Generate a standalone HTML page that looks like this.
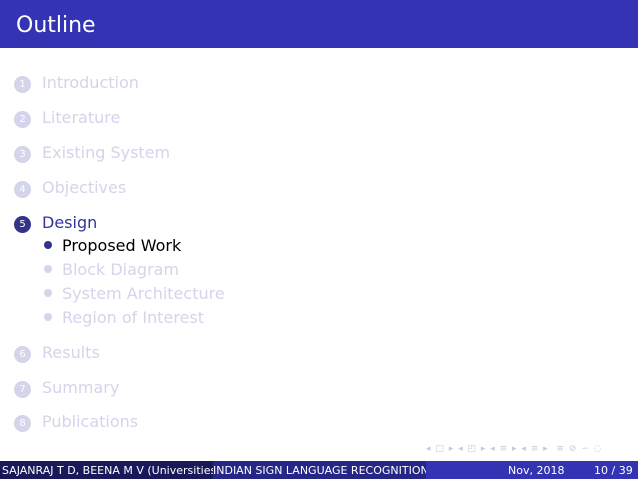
<!DOCTYPE html>
<html><head><style>
body{margin:0;width:638px;height:479px;position:relative;background:#fff;font-family:"DejaVu Sans","Liberation Sans",sans-serif;overflow:hidden}
.hd{position:absolute;left:0;top:0;width:638px;height:48px;background:#3333b3;color:#fff;font-size:22px;line-height:52px;padding-left:16px;box-sizing:border-box}
.it{position:absolute;left:14px;font-size:16px;color:#d4d4ea;white-space:nowrap;height:20px;line-height:20px}
.it b{display:inline-block;width:17px;height:17px;border-radius:50%;background:#d4d4ea;color:#fff;font-size:10px;text-align:center;line-height:17px;font-weight:normal;margin-right:11px;vertical-align:1px}
.it.a{color:#33339c}.it.a b{background:#33338c}
.sub{position:absolute;left:44px;font-size:16px;color:#d4d4ea;white-space:nowrap;line-height:20px}
.sub i{display:inline-block;width:8px;height:8px;border-radius:50%;background:#d4d4ea;margin-right:10px;vertical-align:2px}
.sub.a{color:#000}.sub.a i{background:#33338c}
.ft{position:absolute;top:461px;height:18px;font-size:11px;line-height:19px;color:#fff;white-space:nowrap;overflow:hidden}
.nav{position:absolute;top:444px;left:426px;font-size:9px;color:#c8c8dc;letter-spacing:1px}
</style></head><body>
<div class="hd">Outline</div>
<div class="it" style="top:73px"><b>1</b>Introduction</div>
<div class="it" style="top:108px"><b>2</b>Literature</div>
<div class="it" style="top:143px"><b>3</b>Existing System</div>
<div class="it" style="top:178px"><b>4</b>Objectives</div>
<div class="it a" style="top:213px"><b>5</b>Design</div>
<div class="sub a" style="top:236px"><i></i>Proposed Work</div>
<div class="sub" style="top:260px"><i></i>Block Diagram</div>
<div class="sub" style="top:284px"><i></i>System Architecture</div>
<div class="sub" style="top:308px"><i></i>Region of Interest</div>
<div class="it" style="top:343px"><b>6</b>Results</div>
<div class="it" style="top:378px"><b>7</b>Summary</div>
<div class="it" style="top:412px"><b>8</b>Publications</div>
<div class="nav">◂ □ ▸ ◂ ◰ ▸ ◂ ≡ ▸ ◂ ≡ ▸ &nbsp;≡ ⊘ ∽ ◌</div>
<div class="ft" style="left:0;width:213px;background:#191959;padding-left:2px;box-sizing:border-box">SAJANRAJ T D, BEENA M V (Universities</div>
<div class="ft" style="left:213px;width:213px;background:#262686">INDIAN SIGN LANGUAGE RECOGNITION U</div>
<div class="ft" style="left:426px;width:212px;background:#3333b3"><span style="position:absolute;left:82px">Nov, 2018</span><span style="position:absolute;left:168px">10 / 39</span></div>
</body></html>
